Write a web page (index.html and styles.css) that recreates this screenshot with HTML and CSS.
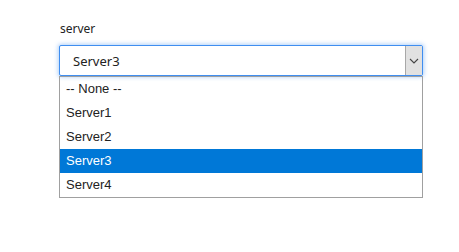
FILE: index.html
```html
<!DOCTYPE html>
<html>
<head>
<meta charset="utf-8">
<link rel="stylesheet" href="styles.css">
</head>
<body>
<div class="field">
  <div class="label">server</div>
  <div class="combo">
    <div class="select">
      <span class="value">Server3</span>
      <span class="arrow"><svg width="10" height="6" viewBox="0 0 10 6"><path d="M1 1 L5 5 L9 1" fill="none" stroke="#444" stroke-width="1.1"/></svg></span>
    </div>
    <ul class="list">
      <li>-- None --</li>
      <li>Server1</li>
      <li>Server2</li>
      <li class="active">Server3</li>
      <li>Server4</li>
    </ul>
  </div>
</div>
</body>
</html>
```
FILE: styles.css
```css
html, body {
  margin: 0;
  padding: 0;
  background: #fff;
}
.field {
  padding: 21px 0 0 59px;
  width: 364px;
}
.label {
  font-family: "Noto Sans", sans-serif;
  font-size: 12px;
  line-height: 16px;
  color: #222;
  margin-bottom: 8px;
  padding-left: 1px;
}
.select {
  box-sizing: border-box;
  height: 31px;
  border: 1px solid #3f8ef0;
  border-radius: 2px;
  box-shadow: 0 0 4px 1px rgba(80, 150, 240, 0.45);
  display: flex;
  align-items: stretch;
  background: #fff;
}
.value {
  flex: 1;
  font-family: "Noto Sans", sans-serif;
  font-size: 13px;
  color: #222;
  padding-left: 13px;
  display: flex;
  align-items: center;
}
.arrow {
  width: 16px;
  background: #e1e1e1;
  border-left: 1px solid #a8a8a8;
  display: flex;
  align-items: center;
  justify-content: center;
}
.list {
  list-style: none;
  margin: 0;
  padding: 0;
  border: 1px solid #a0a0a0;
  font-family: "Liberation Sans", Arial, sans-serif;
  font-size: 13px;
  color: #222;
}
.list li {
  height: 24px;
  line-height: 24px;
  padding-left: 6px;
}
.list li.active {
  background: #0078d7;
  color: #fff;
}
```
